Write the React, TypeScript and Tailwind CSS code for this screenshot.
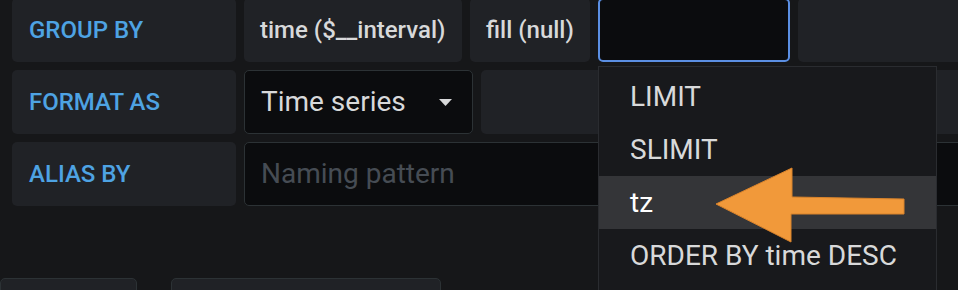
import React from "react";

const font = { fontFamily: "Roboto, 'Noto Sans', sans-serif" };

function Label({ children }: { children: React.ReactNode }) {
  return (
    <div className="w-[224px] shrink-0 rounded-[5px] bg-[#202226] pl-[17px] flex items-center text-[24px] font-medium text-[#4ea3e3]">
      {children}
    </div>
  );
}

function Chip({ children, width }: { children: React.ReactNode; width: string }) {
  return (
    <div className={`${width} shrink-0 rounded-[5px] bg-[#202226] px-4 flex items-center text-[24px] font-medium text-[#d8d9da]`}>
      {children}
    </div>
  );
}

const options = ["LIMIT", "SLIMIT", "tz", "ORDER BY time DESC"];

export default function App() {
  return (
    <div className="relative w-[958px] h-[290px] overflow-hidden bg-[#161719]" style={font}>
      <div className="w-[1000px] pl-3 -mt-[2px] flex flex-col gap-2">
        {/* group by */}
        <div className="flex h-16 gap-2">
          <Label>GROUP BY</Label>
          <Chip width="w-[218px]">time ($__interval)</Chip>
          <Chip width="w-[120px]">fill (null)</Chip>
          <div className="w-[192px] shrink-0 rounded-[5px] border-2 border-[#5b8fe3] bg-[#0b0c0e]"></div>
          <div className="flex-1 rounded-[5px] bg-[#202226]"></div>
        </div>

        {/* format as */}
        <div className="flex h-16 gap-2">
          <Label>FORMAT AS</Label>
          <div className="w-[229px] shrink-0 rounded-[5px] border border-[#2c3235] bg-[#0b0c0e] pl-[16px] pr-[20px] flex items-center justify-between text-[28px] text-[#d8d9da]">
            <span>Time series</span>
            <svg width="13" height="7" viewBox="0 0 13 7">
              <path d="M0 0 H13 L6.5 7 Z" fill="#d8d9da" />
            </svg>
          </div>
          <div className="flex-1 rounded-[5px] bg-[#202226]"></div>
        </div>

        {/* alias by */}
        <div className="flex h-16 gap-2">
          <Label>ALIAS BY</Label>
          <div className="flex-1 rounded-[5px] border border-[#2c3235] bg-[#0b0c0e] pl-[16px] flex items-center text-[28px] text-[#464c54]">
            Naming pattern
          </div>
        </div>
      </div>

      {/* lower row of panels */}
      <div className="flex gap-[34px] mt-[72px]">
        <div className="w-[137px] h-8 rounded-t-[5px] border border-[#2c3235] bg-[#202226]"></div>
        <div className="w-[270px] h-8 rounded-t-[5px] border border-[#2c3235] bg-[#202226]"></div>
      </div>

      {/* dropdown menu */}
      <div className="absolute left-[598px] top-[66px] w-[339px] h-[260px] border border-[#2a2c30] bg-[#18191c] pt-[3px]">
        {options.map((o) => (
          <div
            key={o}
            className={`h-[53px] pl-[31px] flex items-center text-[28px] ${
              o === "tz" ? "bg-[#343538] text-white" : "text-[#d8d9da]"
            }`}
          >
            {o}
          </div>
        ))}
      </div>

      {/* annotation arrow */}
      <svg className="absolute left-0 top-0" width="958" height="290" viewBox="0 0 958 290">
        <path
          d="M716 204 L792 168 L792 197 L904 199 L904 214 L791 214 L791 242 Z"
          fill="#f1993a"
          stroke="#d9832b"
          strokeWidth="1"
          strokeLinejoin="miter"
        />
      </svg>
    </div>
  );
}
